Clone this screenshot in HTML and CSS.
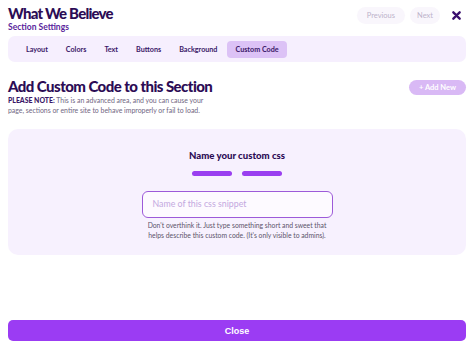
FILE: index.html
```html
<!DOCTYPE html>
<html>
<head>
<meta charset="utf-8">
<link rel="stylesheet" href="styles.css">
</head>
<body>
<div class="modal">
  <header class="top">
    <div class="titles">
      <h1 class="title">What We Believe</h1>
      <div class="subtitle">Section Settings</div>
    </div>
    <div class="nav">
      <button class="navbtn">Previous</button>
      <button class="navbtn next">Next</button>
      <button class="closex" aria-label="Close">
        <svg width="9" height="9" viewBox="0 0 10 10"><path d="M1.5 1.5 L8.5 8.5 M8.5 1.5 L1.5 8.5" stroke="#3a0f6e" stroke-width="2.6" stroke-linecap="round"/></svg>
      </button>
    </div>
  </header>
  <nav class="tabs">
    <span class="tab">Layout</span>
    <span class="tab">Colors</span>
    <span class="tab">Text</span>
    <span class="tab">Buttons</span>
    <span class="tab">Background</span>
    <span class="tab active">Custom Code</span>
  </nav>
  <section class="head2">
    <h2 class="h2">Add Custom Code to this Section</h2>
    <button class="addnew">+ Add New</button>
  </section>
  <p class="note"><b>PLEASE NOTE:</b> This is an advanced area, and you can cause your<br>page, sections or entire site to behave improperly or fail to load.</p>
  <div class="card">
    <div class="cardtitle">Name your custom css</div>
    <div class="bars"><span class="bar"></span><span class="bar"></span></div>
    <div class="input">Name of this css snippet</div>
    <div class="help">Don't overthink it. Just type something short and sweet that<br>helps describe this custom code. (It's only visible to admins).</div>
  </div>
  <div class="spacer"></div>
  <button class="close">Close</button>
</div>
</body>
</html>
```
FILE: styles.css
```css
* { box-sizing: border-box; }
html, body { margin: 0; padding: 0; background: #ffffff; }
body { font-family: "Lato", "Liberation Sans", sans-serif; width: 474px; height: 348px; overflow: hidden; }
.modal { padding: 4px 8px 7px 8px; display: flex; flex-direction: column; height: 348px; }
.top { display: flex; justify-content: space-between; align-items: flex-start; }
.title { margin: 0; font-size: 15px; font-weight: 900; color: #2c0c55; line-height: 18px; letter-spacing: -0.8px; }
.subtitle { font-size: 8.5px; font-weight: 700; color: #5a1f9c; line-height: 10px; }
.nav { display: flex; align-items: center; gap: 5px; padding-top: 3px; }
.navbtn { border: none; background: #f9f6fc; color: #bdb3cb; font-family: inherit; font-size: 7.5px; border-radius: 9px; height: 17px; padding: 0 10px; }
.navbtn.next { padding: 0 7px; }
.closex { border: none; background: none; padding: 0 5px 0 7px; height: 17px; display: flex; align-items: center; }
.tabs { margin-top: 4px; background: #f6effe; border-radius: 7px; height: 26px; display: flex; align-items: center; padding: 0 8px 0 18px; gap: 0; }
.tab { font-size: 7.2px; font-weight: 700; color: #3b1868; height: 17px; line-height: 17px; border-radius: 4px; margin-right: 18px; }
.tab.active { background: #dcc2f6; padding: 0 8px; margin-left: -8px; }
.head2 { display: flex; justify-content: space-between; align-items: center; margin-top: 15px; }
.h2 { margin: 0; font-size: 15px; font-weight: 900; color: #2c0c55; line-height: 19px; letter-spacing: -0.55px; }
.addnew { border: none; background: #d9b9f5; color: #ffffff; font-family: inherit; font-size: 7.5px; font-weight: 700; border-radius: 8px; height: 15px; width: 57px; padding: 0; margin-top: 1px; }
.note { margin: -1px 0 0 0; font-size: 6.9px; line-height: 10px; color: #706682; }
.note b { color: #3b1868; font-weight: 900; }
.card { margin-top: 14px; background: #f7f1fe; border-radius: 10px; height: 126px; display: flex; flex-direction: column; align-items: center; padding-top: 20px; }
.cardtitle { font-size: 9.6px; font-weight: 900; color: #2c0c55; line-height: 13px; }
.bars { display: flex; gap: 10px; margin-top: 9px; }
.bar { width: 40px; height: 5px; border-radius: 3px; background: #9a3ff0; }
.input { margin-top: 15px; width: 191px; height: 27px; border: 1.5px solid #9d5ad9; border-radius: 6px; background: #fdfaff; color: #c3a8e0; font-size: 8.8px; line-height: 24px; padding-left: 10px; }
.help { margin-top: 3px; font-size: 6.8px; line-height: 9.5px; color: #5c546a; text-align: center; }
.spacer { flex: 1; }
.close { border: none; background: #9b3cf3; color: #ffffff; font-family: "Liberation Sans", sans-serif; font-size: 9px; font-weight: 700; border-radius: 5px; height: 21px; width: 100%; padding: 0; }
```
